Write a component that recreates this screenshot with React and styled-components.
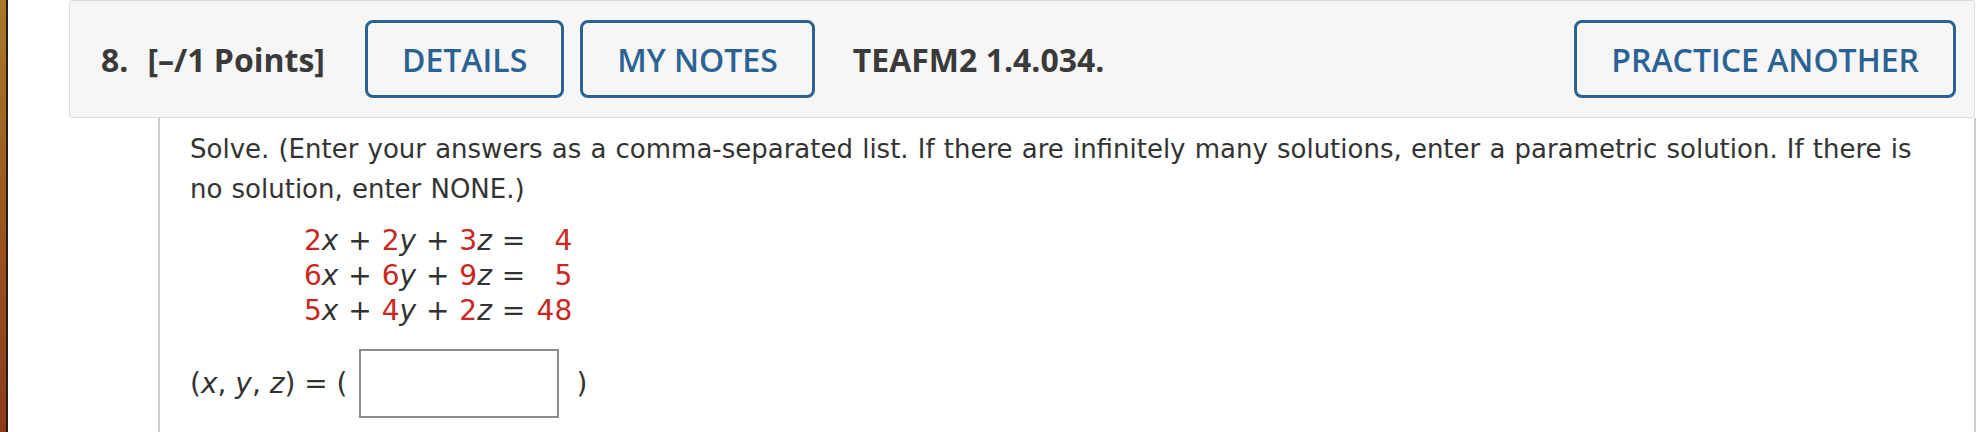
import React from 'react';
import styled, { createGlobalStyle } from 'styled-components';

const GlobalStyle = createGlobalStyle`
  html, body {
    margin: 0;
    padding: 0;
    background: #fff;
  }
  body {
    width: 1977px;
    height: 432px;
    overflow: hidden;
  }
`;

const Page = styled.div`
  display: flex;
  height: 432px;
`;

const Strip = styled.div`
  width: 6px;
  flex-shrink: 0;
  background: linear-gradient(#a9782b, #9b5a20 45%, #8c3a1c);
  border-right: 2px solid #2a1c10;
`;

const Main = styled.div`
  flex: 1;
  display: flex;
  flex-direction: column;
  padding: 0 1px 0 61px;
`;

const Header = styled.div`
  display: flex;
  align-items: center;
  box-sizing: border-box;
  height: 118px;
  margin-right: 1px;
  padding: 0 18px 0 31px;
  background: #f6f6f6;
  border: 1px solid #dcdcdc;
  border-radius: 3px;
  font-family: 'Open Sans', sans-serif;
  color: #3a3a3a;
`;

const Title = styled.div`
  font-size: 32px;
  font-weight: 700;
  white-space: pre;
  margin-right: ${p => p.$gap || 0}px;
`;

const Num = styled.span`
  margin-right: 19px;
`;

const Button = styled.button`
  box-sizing: border-box;
  height: 78px;
  padding: 0 34px;
  margin-right: ${p => p.$gap || 0}px;
  margin-left: ${p => (p.$push ? 'auto' : '0')};
  background: transparent;
  border: 3px solid #2b6294;
  border-radius: 8px;
  color: #2b6294;
  font-family: 'Open Sans', sans-serif;
  font-size: 32px;
  font-weight: 600;
  cursor: pointer;
`;

const Body = styled.div`
  flex: 1;
  margin-left: 89px;
  padding: 11px 30px 0 30px;
  border-left: 2px solid #cbcbcb;
  border-right: 2px solid #cbcbcb;
  font-family: 'DejaVu Sans', Verdana, sans-serif;
  font-size: 28px;
  line-height: 40px;
  color: #333;
`;

const Prompt = styled.p`
  margin: 0;
  font-size: 26px;
  word-spacing: 0.9px;
`;

const Equations = styled.div`
  margin: 14px 0 0 114px;
  line-height: 35px;
  word-spacing: 1px;
`;

const EqRow = styled.div`
  white-space: pre;
`;

const Coef = styled.span`
  color: #c9281f;
`;

const Var = styled.i`
  font-style: italic;
`;

const Const = styled.span`
  display: inline-block;
  width: 47px;
  text-align: right;
  color: #c9281f;
`;

const AnswerRow = styled.div`
  display: flex;
  align-items: center;
  margin-top: 21px;
  white-space: pre;
`;

const AnswerBox = styled.input`
  box-sizing: border-box;
  width: 200px;
  height: 69px;
  margin: 0 18px 0 11px;
  border: 2px solid #8c8c8c;
  background: #fff;
  outline: none;
`;

const rows = [
  [2, 2, 3, 4],
  [6, 6, 9, 5],
  [5, 4, 2, 48],
];

export default function App() {
  return (
    <Page>
      <GlobalStyle />
      <Strip />
      <Main>
        <Header>
          <Title $gap={40}><Num>8.</Num>[–/1 Points]</Title>
          <Button $gap={16}>DETAILS</Button>
          <Button $gap={38}>MY NOTES</Button>
          <Title>TEAFM2 1.4.034.</Title>
          <Button $push>PRACTICE ANOTHER</Button>
        </Header>
        <Body>
          <Prompt>
            Solve. (Enter your answers as a comma-separated list. If there are infinitely many solutions, enter a parametric solution. If there is no solution, enter NONE.)
          </Prompt>
          <Equations>
            {rows.map((r, i) => (
              <EqRow key={i}>
                <Coef>{r[0]}</Coef><Var>x</Var>{' + '}
                <Coef>{r[1]}</Coef><Var>y</Var>{' + '}
                <Coef>{r[2]}</Coef><Var>z</Var>{' ='}
                <Const>{r[3]}</Const>
              </EqRow>
            ))}
          </Equations>
          <AnswerRow>
            <span>(<Var>x</Var>, <Var>y</Var>, <Var>z</Var>) = (</span>
            <AnswerBox type="text" />
            <span>)</span>
          </AnswerRow>
        </Body>
      </Main>
    </Page>
  );
}
